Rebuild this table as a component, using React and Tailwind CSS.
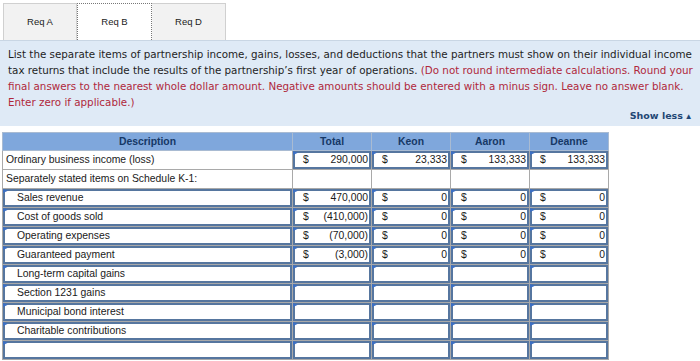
import React from "react";

const flag = (
  <span
    className="absolute left-[-2px] top-[-2px] w-[5px] h-[6px] bg-[#3b6fc4]"
    style={{ clipPath: "polygon(0 0, 100% 30%, 0 65%)" }}
  />
);

function ValInput({ v, dollar }) {
  return (
    <div className="relative h-[18px] border-2 border-[#56769f] bg-white flex items-center pl-[8px] pr-[1px]">
      {flag}
      {dollar ? <span>$</span> : null}
      <span className="ml-auto">{v}</span>
    </div>
  );
}

function DescInput({ label }) {
  return (
    <div className="relative h-[18px] border-2 border-[#56769f] bg-white flex items-center pl-[12px]">
      {flag}
      <span>{label}</span>
    </div>
  );
}

const zeros = ["0", "0", "0"];
const rows = [
  { label: "Ordinary business income (loss)", descInput: false, vals: ["290,000", "23,333", "133,333", "133,333"], dollar: true },
  { label: "Separately stated items on Schedule K-1:", descInput: false, vals: null },
  { label: "Sales revenue", descInput: true, vals: ["470,000", ...zeros], dollar: true },
  { label: "Cost of goods sold", descInput: true, vals: ["(410,000)", ...zeros], dollar: true },
  { label: "Operating expenses", descInput: true, vals: ["(70,000)", ...zeros], dollar: true },
  { label: "Guaranteed payment", descInput: true, vals: ["(3,000)", ...zeros], dollar: true },
  { label: "Long-term capital gains", descInput: true, vals: ["", "", "", ""], dollar: false },
  { label: "Section 1231 gains", descInput: true, vals: ["", "", "", ""], dollar: false },
  { label: "Municipal bond interest", descInput: true, vals: ["", "", "", ""], dollar: false },
  { label: "Charitable contributions", descInput: true, vals: ["", "", "", ""], dollar: false },
  { label: "", descInput: true, vals: ["", "", "", ""], dollar: false },
];

export default function App() {
  return (
    <div className="w-[700px] h-[361px] bg-white overflow-hidden relative">
      {/* Tabs */}
      <div className="flex pl-[3px] pt-[3px] h-[40px] font-['Liberation_Sans',Arial,sans-serif] text-[9.5px] text-[#222]">
        <div className="w-[74px] h-[37px] bg-[#f2f2f2] border border-[#d0d0d0] border-b-0 flex items-center justify-center">Req A</div>
        <div className="w-[75px] h-[37px] bg-white border border-dotted border-[#777] border-b-0 flex items-center justify-center">Req B</div>
        <div className="w-[74px] h-[37px] bg-[#f2f2f2] border border-[#d0d0d0] border-b-0 border-l-0 flex items-center justify-center">Req D</div>
      </div>
      {/* Instructions */}
      <div className="bg-[#dfeaf6] border-t border-[#c9d6e4] h-[86px] pl-[8px] pr-[8px] pt-[5px] font-['DejaVu_Sans',Verdana,sans-serif] text-[10.33px] leading-[16px] text-[#1e1e1e]">
        <p className="w-[688px]">
          List the separate items of partnership income, gains, losses, and deductions that the partners must show on their individual income tax returns that include the results of the partnership’s first year of operations.{" "}
          <span className="text-[#b0283c]">
            (Do not round intermediate calculations. Round your final answers to the nearest whole dollar amount. Negative amounts should be entered with a minus sign. Leave no answer blank. Enter zero if applicable.)
          </span>
        </p>
        <div className="text-right font-bold text-[#1f4775] text-[9.5px] leading-[12px] mt-0 pr-[1px]">Show less ▴</div>
      </div>
      {/* Table */}
      <div className="pl-[2px] pt-[6px] font-['Liberation_Sans',Arial,sans-serif] text-[10.4px] text-[#1a1a1a]">
        <table className="border-collapse table-fixed w-[606px]">
          <colgroup>
            <col className="w-[290px]" />
            <col className="w-[79px]" />
            <col className="w-[79px]" />
            <col className="w-[79px]" />
            <col className="w-[79px]" />
          </colgroup>
          <thead>
            <tr className="h-[18px] bg-[#7fa7dc] text-[#163866] font-bold">
              {["Description", "Total", "Keon", "Aaron", "Deanne"].map((h) => (
                <th key={h} className="border border-[#a9bbd2] p-0 text-center font-bold">{h}</th>
              ))}
            </tr>
          </thead>
          <tbody>
            {rows.map((r, i) => (
              <tr key={i} className="h-[19px]">
                <td className="border border-[#a9a9a9] p-0 align-middle">
                  {r.descInput ? <DescInput label={r.label} /> : <div className="pl-[3px]">{r.label}</div>}
                </td>
                {[0, 1, 2, 3].map((c) => (
                  <td key={c} className="border border-[#a9a9a9] p-0 align-middle">
                    {r.vals ? <ValInput v={r.vals[c]} dollar={r.dollar} /> : null}
                  </td>
                ))}
              </tr>
            ))}
          </tbody>
        </table>
      </div>
    </div>
  );
}
